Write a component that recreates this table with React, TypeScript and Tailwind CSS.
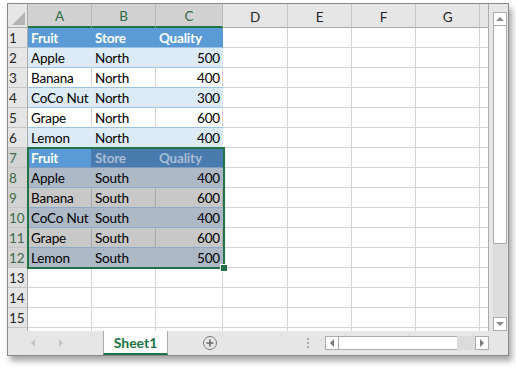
import React from "react";

type Kind = "head" | "band" | "plain" | "selHead" | "selBand" | "selPlain" | "empty";

const cols = ["A", "B", "C", "D", "E", "F", "G", ""];

const data: { n: number; kind: Kind; cells: string[] }[] = [
  { n: 1, kind: "head", cells: ["Fruit", "Store", "Quality"] },
  { n: 2, kind: "band", cells: ["Apple", "North", "500"] },
  { n: 3, kind: "plain", cells: ["Banana", "North", "400"] },
  { n: 4, kind: "band", cells: ["CoCo Nut", "North", "300"] },
  { n: 5, kind: "plain", cells: ["Grape", "North", "600"] },
  { n: 6, kind: "band", cells: ["Lemon", "North", "400"] },
  { n: 7, kind: "selHead", cells: ["Fruit", "Store", "Quality"] },
  { n: 8, kind: "selBand", cells: ["Apple", "South", "400"] },
  { n: 9, kind: "selPlain", cells: ["Banana", "South", "600"] },
  { n: 10, kind: "selBand", cells: ["CoCo Nut", "South", "400"] },
  { n: 11, kind: "selPlain", cells: ["Grape", "South", "600"] },
  { n: 12, kind: "selBand", cells: ["Lemon", "South", "500"] },
  { n: 13, kind: "empty", cells: [] },
  { n: 14, kind: "empty", cells: [] },
  { n: 15, kind: "empty", cells: [] },
  { n: 16, kind: "empty", cells: [] },
];

const cellStyle = (kind: Kind, col: number) => {
  if (col > 2 || kind === "empty") return "bg-white border-r-[#d4d4d4] border-b-[#d4d4d4]";
  switch (kind) {
    case "head":
      return "bg-[#5b9bd5] text-white font-bold border-r-[#5b9bd5] border-b-[#9bc2e6]";
    case "band":
      return "bg-[#ddebf7] text-black border-r-[#ddebf7] border-b-[#9bc2e6]";
    case "plain":
      return "bg-white text-black border-r-[#d4d4d4] border-b-[#9bc2e6]";
    case "selHead":
      return col === 0
        ? "bg-[#5b9bd5] text-white font-bold border-r-[#4a7bae] border-b-[#7d9cc0]"
        : "bg-[#4a7bae] text-[#a8bed6] font-bold border-r-[#4a7bae] border-b-[#7d9cc0]";
    case "selBand":
      return "bg-[#adb9c7] text-black border-r-[#adb9c7] border-b-[#8ea9c8]";
    default:
      return "bg-[#c8c8c8] text-black border-r-[#a9a9a9] border-b-[#8ea9c8]";
  }
};

const Tri = ({ dir, color }: { dir: "l" | "r" | "u" | "d"; color: string }) => {
  const pts = { l: "5,0 5,8 1,4", r: "1,0 1,8 5,4", u: "0,5 8,5 4,1", d: "0,1 8,1 4,5" }[dir];
  const w = dir === "l" || dir === "r" ? 6 : 8;
  const h = dir === "l" || dir === "r" ? 8 : 6;
  return (
    <svg width={w} height={h} viewBox={`0 0 ${w} ${h}`}>
      <polygon points={pts} fill={color} />
    </svg>
  );
};

export default function App() {
  return (
    <div
      className="w-[516px] h-[368px] bg-white pl-[7px] pt-[3px] overflow-hidden"
      style={{ fontFamily: "Lato, 'Liberation Sans', sans-serif" }}
    >
      <div className="w-[502px] h-[353px] border border-[#8a8a8a] bg-[#e6e6e6] flex flex-col shadow-[3px_5px_6px_rgba(0,0,0,0.35)]">
        <div className="flex h-[327px]">
          {/* grid */}
          <div className="relative w-[481px] h-[327px] overflow-hidden border-r border-[#ababab] bg-white">
            <div className="grid grid-cols-[20px_64px_64px_67px_65px_64px_64px_64px_9px] text-[13.5px] tracking-[-0.2px]">
              {/* header row */}
              <div className="h-[24px] bg-[#e6e6e6] border-r border-b border-[#ababab] relative">
                <svg className="absolute right-[2px] bottom-[2px]" width="13" height="13" viewBox="0 0 13 13">
                  <polygon points="13,0 13,13 0,13" fill="#b4b4b4" />
                </svg>
              </div>
              {cols.map((c, i) =>
                i < 3 ? (
                  <div
                    key={c}
                    className="h-[24px] bg-[#d2d2d2] border-r border-r-[#b8b8b8] border-b-2 border-b-[#217346] flex items-center justify-center pt-[3px] text-[#2f6b46]"
                  >
                    {c}
                  </div>
                ) : (
                  <div
                    key={"h" + i}
                    className="h-[24px] bg-[#e6e6e6] border-r border-r-[#c6c6c6] border-b border-b-[#ababab] flex items-center justify-center pt-[3px] text-[#262626]"
                  >
                    {c}
                  </div>
                )
              )}
              {data.map((row) => (
                <React.Fragment key={row.n}>
                  {row.n >= 7 && row.n <= 12 ? (
                    <div className="h-[20px] bg-[#d2d2d2] border-r border-r-[#ababab] border-b border-b-[#c6c6c6] flex items-center pl-[1px] pt-[2px] text-[#3d6b4c]">
                      {row.n}
                    </div>
                  ) : (
                    <div className="h-[20px] bg-[#e6e6e6] border-r border-r-[#ababab] border-b border-b-[#c6c6c6] flex items-center pl-[1px] pt-[2px] text-[#262626]">
                      {row.n < 16 ? row.n : ""}
                    </div>
                  )}
                  {cols.map((_, ci) => (
                    <div
                      key={ci}
                      className={`h-[20px] border-r border-b flex items-center pt-[2px] whitespace-nowrap overflow-hidden ${
                        ci === 2 && row.kind !== "head" && row.kind !== "selHead" ? "justify-end pr-[2px]" : "pl-[3px]"
                      } ${cellStyle(row.kind, ci)}`}
                    >
                      {row.cells[ci] ?? ""}
                    </div>
                  ))}
                </React.Fragment>
              ))}
            </div>
            {/* selection box */}
            <div className="absolute left-[19px] top-[143px] w-[198px] h-[122px] border-2 border-[#217346]" />
            <div className="absolute left-[213px] top-[261px] w-[6px] h-[6px] bg-[#217346] outline outline-1 outline-white" />
          </div>
          {/* vertical scrollbar */}
          <div className="w-[19px] flex flex-col items-end pr-[1px] pt-[8px]">
            <div className="w-[14px] h-[14px] bg-white border border-[#ababab] flex items-center justify-center">
              <Tri dir="u" color="#8a8a8a" />
            </div>
            <div className="w-[14px] h-[218px] bg-white border border-t-0 border-[#ababab]" />
            <div className="w-[14px] flex-1 bg-[#dcdcdc]" />
            <div className="w-[14px] h-[14px] bg-white border border-[#ababab] flex items-center justify-center">
              <Tri dir="d" color="#8a8a8a" />
            </div>
          </div>
        </div>
        {/* bottom bar */}
        <div className="flex-1 flex items-stretch">
          <div className="w-[95px] flex items-center pl-[22px] gap-[22px]">
            <Tri dir="l" color="#c4c4c4" />
            <Tri dir="r" color="#c4c4c4" />
          </div>
          <div className="w-[65px] bg-white border-x border-[#ababab] border-b-2 border-b-[#217346] flex items-center justify-center pt-[1px] text-[14px] font-bold text-[#217346]">
            Sheet1
          </div>
          <div className="ml-[35px] flex items-center">
            <div className="w-[14px] h-[14px] rounded-full border border-[#7a7a7a] flex items-center justify-center">
              <svg width="8" height="8" viewBox="0 0 8 8">
                <path d="M4 0.5V7.5M0.5 4H7.5" stroke="#6a6a6a" strokeWidth="1.6" />
              </svg>
            </div>
          </div>
          <div className="ml-[90px] flex flex-col justify-center gap-[2px]">
            <div className="w-[2px] h-[2px] bg-[#a8a8a8]" />
            <div className="w-[2px] h-[2px] bg-[#a8a8a8]" />
            <div className="w-[2px] h-[2px] bg-[#a8a8a8]" />
          </div>
          <div className="ml-[16px] flex items-center">
            <div className="w-[14px] h-[14px] bg-white border border-[#ababab] flex items-center justify-center">
              <Tri dir="l" color="#7a7a7a" />
            </div>
            <div className="w-[118px] h-[14px] bg-white border-y border-[#ababab]" />
            <div className="w-[18px] h-[14px] bg-[#dcdcdc]" />
            <div className="w-[14px] h-[14px] bg-white border border-[#ababab] flex items-center justify-center">
              <Tri dir="r" color="#7a7a7a" />
            </div>
          </div>
        </div>
      </div>
    </div>
  );
}
